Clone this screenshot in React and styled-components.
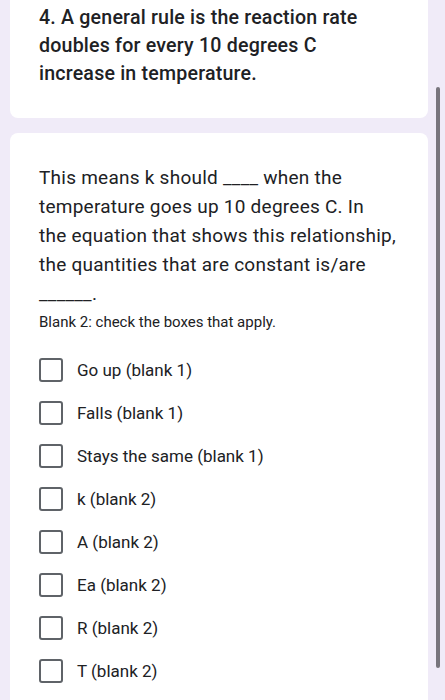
import React from 'react'
import styled, { createGlobalStyle } from 'styled-components'

const GlobalStyle = createGlobalStyle`
  html, body {
    margin: 0;
    padding: 0;
    background: #f0ebf8;
    overflow: hidden;
  }
`

const Page = styled.div`
  position: relative;
  width: 445px;
  height: 700px;
  overflow: hidden;
  background: #f0ebf8;
`

const Column = styled.div`
  display: flex;
  flex-direction: column;
  gap: 15px;
  width: 418px;
  margin-left: 10px;
  margin-top: -13px;
`

const Card = styled.div`
  background: #ffffff;
  border-radius: 8px;
  padding: ${p => p.$pad};
  box-sizing: border-box;
`

const Title = styled.div`
  font-family: Roboto, "Liberation Sans", sans-serif;
  font-weight: 500;
  font-size: 19.6px;
  line-height: 28px;
  letter-spacing: 0.2px;
  color: #202124;
`

const Body = styled.div`
  font-family: Roboto, "Liberation Sans", sans-serif;
  font-size: 19px;
  line-height: 29px;
  letter-spacing: 0.25px;
  white-space: nowrap;
  color: #202124;
`

const Hint = styled.div`
  font-family: Roboto, "Liberation Sans", sans-serif;
  font-size: 15px;
  line-height: 20px;
  color: #202124;
  margin-top: 4px;
`

const Options = styled.div`
  display: flex;
  flex-direction: column;
  gap: 19px;
  margin-top: 26px;
`

const Option = styled.label`
  display: flex;
  align-items: center;
  gap: 14px;
  height: 24px;
  font-family: Roboto, "Liberation Sans", sans-serif;
  font-size: 17px;
  color: #202124;
`

const Box = styled.span`
  width: 24px;
  height: 24px;
  box-sizing: border-box;
  border: 2px solid #5f6368;
  border-radius: 3px;
  flex: none;
`

const Scrollbar = styled.div`
  position: absolute;
  left: 436px;
  top: 87px;
  width: 4px;
  height: 581px;
  background: #78757d;
  border-radius: 2px;
`

const bodyLines = [
  'This means k should ____ when the',
  'temperature goes up 10 degrees C. In',
  'the equation that shows this relationship,',
  'the quantities that are constant is/are',
  '______.',
]

const options = [
  'Go up (blank 1)',
  'Falls (blank 1)',
  'Stays the same (blank 1)',
  'k (blank 2)',
  'A (blank 2)',
  'Ea (blank 2)',
  'R (blank 2)',
  'T (blank 2)',
]

export default function App() {
  return (
    <Page>
      <GlobalStyle />
      <Column>
        <Card $pad="17px 36px 30px 29px">
          <Title>
            4. A general rule is the reaction rate doubles for every 10 degrees C
            increase in temperature.
          </Title>
        </Card>
        <Card $pad="30px 28px 40px 29px">
          <Body>
            {bodyLines.map(l => (
              <div key={l}>{l}</div>
            ))}
          </Body>
          <Hint>Blank 2: check the boxes that apply.</Hint>
          <Options>
            {options.map(o => (
              <Option key={o}>
                <Box />
                {o}
              </Option>
            ))}
          </Options>
        </Card>
      </Column>
      <Scrollbar />
    </Page>
  )
}
